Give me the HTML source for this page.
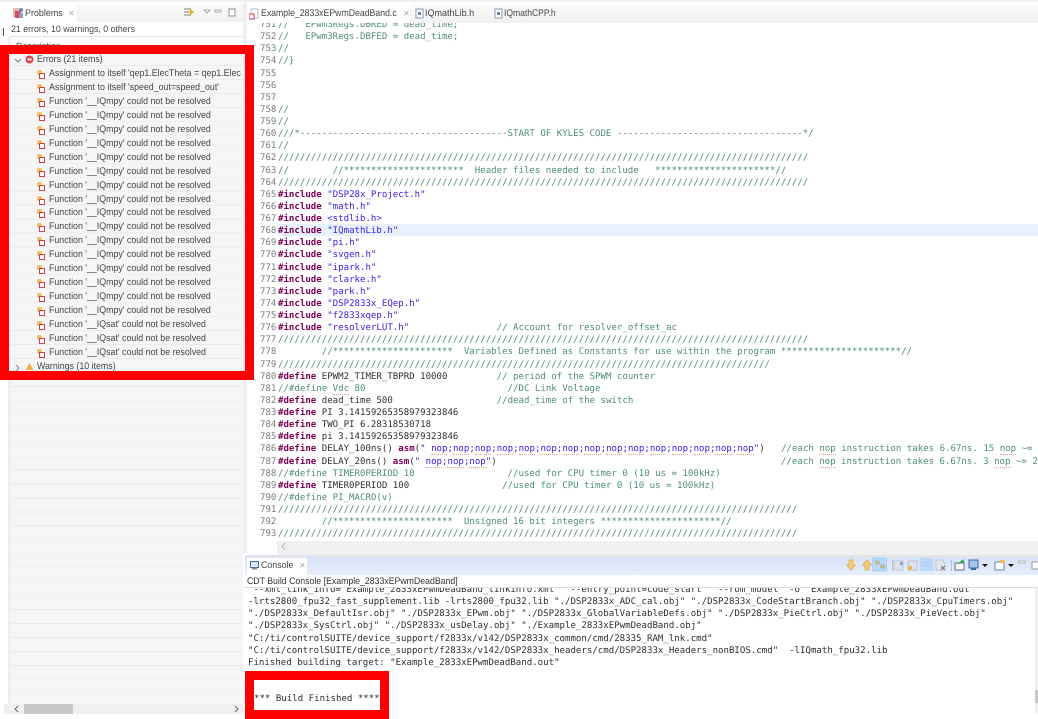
<!DOCTYPE html>
<html><head><meta charset="utf-8"><style>
html,body{margin:0;padding:0;width:1038px;height:719px;overflow:hidden;background:#fff}
#w{position:absolute;left:0;top:0;width:1038px;height:719px;overflow:hidden;filter:blur(.35px);background:#fff;font-family:"Liberation Sans",sans-serif;color:#3c3c3c;text-rendering:geometricPrecision}
.a{position:absolute}
.t{position:absolute;font-size:9px;line-height:12px;white-space:pre;transform-origin:0 50%}
pre{margin:0;font-family:"DejaVu Sans Mono","Liberation Mono",monospace;font-size:9.08px;line-height:12.122px;text-rendering:geometricPrecision}
.g{color:#4f8f76}.k{color:#7f0055;font-weight:bold}.s{color:#3a20ee}.d{color:#2f2f2f}
u{text-decoration:none;border-bottom:1px dotted #eb9a8c}
.r{position:absolute;left:0;height:14px;width:243px;font-size:9.6px;line-height:14px;white-space:pre;color:#444;overflow:hidden}
.r i{position:absolute;left:37px;top:3px;width:5px;height:5px;background:#f0c060;border-radius:2px}
.r i:after{content:"";position:absolute;left:2px;top:3px;width:4px;height:4px;border:1px solid #d83a4a;background:#fff}
.r span{position:absolute;left:49px;top:0;transform:scaleX(.92);transform-origin:0 50%}
</style></head><body><div id="w">

<!-- top bars -->
<div class="a" style="left:0;top:0;width:1038px;height:2px;background:#efefef"></div>
<div class="a" style="left:77px;top:4px;width:166px;height:18px;background:linear-gradient(#fafafa,#f1f1f1)"></div>
<div class="a" style="left:410px;top:4px;width:628px;height:19px;background:linear-gradient(#fafafa,#f1f1f1)"></div>
<div class="a" style="left:243px;top:3px;width:4px;height:550px;background:#f0f0f0"></div>
<div class="a" style="left:3px;top:28px;width:1px;height:8px;background:#555"></div>

<!-- Problems tab -->
<svg class="a" style="left:12px;top:7px" width="12" height="13"><rect x="1" y="1" width="6" height="9" fill="#e9b6b6"/><rect x="3" y="4" width="6" height="7" fill="#d94a5a"/><circle cx="9" cy="3" r="2" fill="#6b84b8"/><rect x="7" y="6" width="4" height="5" fill="#8aa0c8"/></svg>
<div class="t" style="left:25px;top:8px;font-size:9.5px;transform:scaleX(.94);color:#444">Problems</div>
<div class="t" style="left:68px;top:8px;font-size:8px;color:#aaa">✕</div>
<!-- problems toolbar -->
<svg class="a" style="left:183px;top:6px" width="58" height="13">
<path d="M1 3h7M1 6h7M1 9h7" stroke="#8a8a5a" stroke-width="1"/><path d="M7 3l4 3-4 3z" fill="#e3a92c"/>
<path d="M21 4h6l-3 3z" fill="#fff" stroke="#9a9a9a" stroke-width=".8"/>
<rect x="32" y="4" width="6" height="2" fill="#fff" stroke="#9a9a9a" stroke-width=".8"/>
<rect x="46" y="3" width="6" height="7" fill="#fff" stroke="#8f8f8f" stroke-width="1"/></svg>
<div class="t" style="left:11px;top:23px;font-size:9.35px;transform:scaleX(.94);color:#444">21 errors, 10 warnings, 0 others</div>
<div class="a" style="left:10px;top:36px;width:233px;height:1px;background:#e2e2e2"></div>
<div class="t" style="left:16px;top:40px;color:#444">Description</div>

<!-- problems table -->
<div class="a" style="left:8px;top:37px;width:3px;height:667px;background:#efefef"></div>
<div class="a" style="left:11px;top:52px;width:232px;height:652px;background:repeating-linear-gradient(#f6f6f6 0,#f6f6f6 13.2px,#ebebeb 13.2px,#ebebeb 13.95px)"></div>
<div class="a" style="left:0;top:53px;width:243px;height:330px;overflow:hidden">
<div class="r" style="top:0"><svg class="a" style="left:14px;top:5px" width="8" height="6"><path d="M1 1l3 3 3-3" fill="none" stroke="#777"/></svg><svg class="a" style="left:25px;top:2px" width="9" height="9"><circle cx="4.5" cy="4.5" r="4" fill="#d8404c"/><rect x="2.5" y="3.5" width="4" height="2" fill="#fff"/></svg><span style="left:37px">Errors (21 items)</span></div>
<div class="r" style="top:14px"><i></i><span>Assignment to itself 'qep1.ElecTheta = qep1.Elec</span></div>
<div class="r" style="top:28px"><i></i><span>Assignment to itself 'speed_out=speed_out'</span></div>
<div class="r" style="top:42px"><i></i><span>Function '__IQmpy' could not be resolved</span></div>
<div class="r" style="top:56px"><i></i><span>Function '__IQmpy' could not be resolved</span></div>
<div class="r" style="top:70px"><i></i><span>Function '__IQmpy' could not be resolved</span></div>
<div class="r" style="top:84px"><i></i><span>Function '__IQmpy' could not be resolved</span></div>
<div class="r" style="top:98px"><i></i><span>Function '__IQmpy' could not be resolved</span></div>
<div class="r" style="top:112px"><i></i><span>Function '__IQmpy' could not be resolved</span></div>
<div class="r" style="top:126px"><i></i><span>Function '__IQmpy' could not be resolved</span></div>
<div class="r" style="top:140px"><i></i><span>Function '__IQmpy' could not be resolved</span></div>
<div class="r" style="top:153px"><i></i><span>Function '__IQmpy' could not be resolved</span></div>
<div class="r" style="top:167px"><i></i><span>Function '__IQmpy' could not be resolved</span></div>
<div class="r" style="top:181px"><i></i><span>Function '__IQmpy' could not be resolved</span></div>
<div class="r" style="top:195px"><i></i><span>Function '__IQmpy' could not be resolved</span></div>
<div class="r" style="top:209px"><i></i><span>Function '__IQmpy' could not be resolved</span></div>
<div class="r" style="top:223px"><i></i><span>Function '__IQmpy' could not be resolved</span></div>
<div class="r" style="top:237px"><i></i><span>Function '__IQmpy' could not be resolved</span></div>
<div class="r" style="top:251px"><i></i><span>Function '__IQmpy' could not be resolved</span></div>
<div class="r" style="top:265px"><i></i><span>Function '__IQsat' could not be resolved</span></div>
<div class="r" style="top:279px"><i></i><span>Function '__IQsat' could not be resolved</span></div>
<div class="r" style="top:293px"><i></i><span>Function '__IQsat' could not be resolved</span></div>
<div class="r" style="top:307px"><svg class="a" style="left:15px;top:4px" width="6" height="8"><path d="M1 1l3 3-3 3" fill="none" stroke="#888"/></svg><svg class="a" style="left:25px;top:2px" width="9" height="9"><path d="M4.5 1l4 7h-8z" fill="#eab04a"/></svg><span style="left:37px">Warnings (10 items)</span></div>
</div>
<!-- h scrollbar -->
<div class="a" style="left:4px;top:704px;width:239px;height:10px;background:#f0f0f0"></div>
<div class="a" style="left:24px;top:704px;width:49px;height:10px;background:#c8c8c8"></div>
<svg class="a" style="left:14px;top:705px" width="230" height="8"><path d="M4 1L1 4l3 3" fill="none" stroke="#666"/><path d="M221 1l3 3-3 3" fill="none" stroke="#666"/></svg>

<!-- editor tabs -->
<svg class="a" style="left:249px;top:8px" width="11" height="12"><rect x="2" y="1" width="7" height="9" fill="#fff" stroke="#9ab" stroke-width=".8"/><rect x="0" y="6" width="5" height="5" fill="#fff" stroke="#d83a4a"/></svg>
<div class="t" style="left:261px;top:8px;font-size:9.7px;color:#444;transform:scaleX(.9)">Example_2833xEPwmDeadBand.c</div>
<div class="t" style="left:403px;top:8px;font-size:8px;color:#aaa">✕</div>
<svg class="a" style="left:415px;top:8px" width="9" height="11"><rect x="1" y="1" width="7" height="9" fill="#fff" stroke="#8a9bb8"/><rect x="3" y="4" width="3" height="3" fill="#6a80b0"/></svg>
<div class="t" style="left:425px;top:8px;font-size:9.6px;color:#444;transform:scaleX(.94)">IQmathLib.h</div>
<svg class="a" style="left:494px;top:8px" width="9" height="11"><rect x="1" y="1" width="7" height="9" fill="#fff" stroke="#8a9bb8"/><rect x="3" y="4" width="3" height="3" fill="#6a80b0"/></svg>
<div class="t" style="left:504px;top:8px;font-size:9.6px;color:#444;transform:scaleX(.89)">IQmathCPP.h</div>

<!-- editor -->
<div class="a" style="left:277px;top:224px;width:761px;height:12px;background:#e8f2fe"></div>
<div class="a" style="left:247px;top:23px;width:30px;height:518px;overflow:hidden"><pre style="position:absolute;left:13px;top:-4px;color:#7c7c7c">751
752
753
754
755
756
757
758
759
760
761
762
763
764
765
766
767
768
769
770
771
772
773
774
775
776
777
778
779
780
781
782
783
784
785
786
787
788
789
790
791
792
793</pre></div>
<div class="a" style="left:278px;top:23px;width:760px;height:518px;overflow:hidden"><pre style="position:absolute;left:0;top:-4px"><span class="g">//   EPwm3Regs.DBRED = dead_time;
//   EPwm3Regs.DBFED = dead_time;
//
//}</span>



<span class="g">//
//
///*--------------------------------------START OF KYLES CODE ----------------------------------*/
//
/////////////////////////////////////////////////////////////////////////////////////////////////
//        //**********************  Header files needed to include   **********************//
/////////////////////////////////////////////////////////////////////////////////////////////////</span>
<span class="k">#include</span> <span class="s">"DSP28x_Project.h"</span>
<span class="k">#include</span> <span class="s">"math.h"</span>
<span class="k">#include</span> <span class="s">&lt;stdlib.h&gt;</span>
<span class="k">#include</span> <span class="s">"IQmathLib.h"</span>
<span class="k">#include</span> <span class="s">"pi.h"</span>
<span class="k">#include</span> <span class="s">"svgen.h"</span>
<span class="k">#include</span> <span class="s">"ipark.h"</span>
<span class="k">#include</span> <span class="s">"clarke.h"</span>
<span class="k">#include</span> <span class="s">"park.h"</span>
<span class="k">#include</span> <span class="s">"DSP2833x_EQep.h"</span>
<span class="k">#include</span> <span class="s">"f2833xqep.h"</span>
<span class="k">#include</span> <span class="s">"resolverLUT.h"</span>                <span class="g">// Account for resolver_offset_ac</span>
<span class="g">/////////////////////////////////////////////////////////////////////////////////////////////////
        //**********************  Variables Defined as Constants for use within the program **********************//
//////////////////////////////////////////////////////////////////////////////////////////</span>
<span class="k">#define</span> <span class="d">EPWM2_TIMER_TBPRD 10000</span>         <span class="g">// period of the SPWM counter</span>
<span class="g">//#define <u>Vdc</u> 80                          //DC Link Voltage</span>
<span class="k">#define</span> <span class="d">dead_time 500</span>                   <span class="g">//dead_time of the switch</span>
<span class="k">#define</span> <span class="d">PI 3.14159265358979323846</span>
<span class="k">#define</span> <span class="d">TWO_PI 6.28318530718</span>
<span class="k">#define</span> <span class="d">pi 3.14159265358979323846</span>
<span class="k">#define</span> <span class="d">DELAY_100ns()</span> <span class="k">asm</span><span class="d">(</span><span class="s">" <u>nop</u>;<u>nop</u>;<u>nop</u>;<u>nop</u>;<u>nop</u>;<u>nop</u>;<u>nop</u>;<u>nop</u>;<u>nop</u>;<u>nop</u>;<u>nop</u>;<u>nop</u>;<u>nop</u>;<u>nop</u>;<u>nop</u>"</span><span class="d">)</span>   <span class="g">//each <u>nop</u> instruction takes 6.67ns. 15 <u>nop</u> ~= 100ns</span>
<span class="k">#define</span> <span class="d">DELAY_20ns()</span> <span class="k">asm</span><span class="d">(</span><span class="s">" <u>nop</u>;<u>nop</u>;<u>nop</u>"</span><span class="d">)</span>                                                    <span class="g">//each <u>nop</u> instruction takes 6.67ns. 3 <u>nop</u> ~= 20ns</span>
<span class="g">//#define TIMER0PERIOD 10                 //used for CPU timer 0 (10 us = 100kHz)</span>
<span class="k">#define</span> <span class="d">TIMER0PERIOD 100</span>                 <span class="g">//used for CPU timer 0 (10 us = 100kHz)</span>
<span class="g">//#define PI_MACRO(v)
///////////////////////////////////////////////////////////////////////////////////////////////
        //**********************  Unsigned 16 bit integers **********************//
///////////////////////////////////////////////////////////////////////////////////////////////</span></pre></div>
<div class="a" style="left:277px;top:541px;width:761px;height:14px;background:#f0f0f0"></div>
<svg class="a" style="left:281px;top:542px" width="6" height="9"><path d="M4 1L1 4.500l3 3.500" fill="none" stroke="#bbb"/></svg>
<div class="a" style="left:245px;top:555px;width:793px;height:2px;background:#e4e4e4"></div>

<!-- console header -->
<div class="a" style="left:245px;top:557px;width:793px;height:18px;background:linear-gradient(#d8e3f8,#e6edfb)"></div>
<div class="a" style="left:247px;top:558px;width:60px;height:17px;background:#fff"></div>
<svg class="a" style="left:250px;top:561px" width="9" height="9"><rect x=".5" y=".5" width="8" height="6" fill="#dbe6f5" stroke="#51719f"/><rect x="2" y="7" width="5" height="1.500" fill="#7a8ba8"/></svg>
<div class="t" style="left:261px;top:560px;font-size:9.5px;color:#444;transform:scaleX(.93)">Console</div>
<div class="t" style="left:299px;top:560px;font-size:8px;color:#aaa">✕</div>
<svg class="a" style="left:845px;top:557px" width="193" height="18">
<path d="M4 3h4v5h2.500L6 13 1.500 8H4z" fill="#f3cd7a" stroke="#d9a640" stroke-width=".7"/>
<path d="M20 13h4V8h2.500L22 3l-4.500 5H20z" fill="#f3cd7a" stroke="#d9a640" stroke-width=".7"/>
<rect x="27.500" y="1" width="14" height="13" fill="#bcd8f8" stroke="#9cc3ef" stroke-width=".6"/>
<path d="M31 4h3v3h-3zM36 8h3v3h-3z" fill="#f3cd7a" stroke="#8a8a6a" stroke-width=".6"/>
<path d="M47.500 3v11" stroke="#b8c0d0"/>
<rect x="49" y="4" width="9" height="9" fill="#dfe4ea" stroke="#aab6c6" stroke-width=".7"/><path d="M55 5h3v3h-3z" fill="#8fa0b8"/>
<rect x="63" y="4" width="9" height="9" fill="#dfe4ea" stroke="#aab6c6" stroke-width=".7"/><rect x="63" y="9" width="4" height="4" fill="#e6b95a"/>
<rect x="74.500" y="1" width="14" height="13" fill="#bcd8f8"/><path d="M78 5h7M78 8h6" stroke="#a8c4ea"/>
<path d="M91 3h6l3 3v7h-9z" fill="#e4e6ea" stroke="#b4bcc8" stroke-width=".7"/><path d="M96 9l4 4m0-4l-4 4" stroke="#777"/>
<path d="M106.500 3v11" stroke="#b8c0d0"/>
<rect x="110" y="6" width="9" height="7" fill="#fff" stroke="#5a6f8f"/><path d="M113 7l5-4 1 2" fill="#2fa84f" stroke="#2fa84f"/>
<rect x="124" y="3" width="9" height="8" fill="#a8c4ea" stroke="#3c6aa8"/><rect x="126" y="11" width="5" height="2" fill="#3c6aa8"/>
<path d="M137 7h6l-3 3z" fill="#111"/>
<rect x="150" y="5" width="9" height="8" fill="#fff" stroke="#6a84a8"/><rect x="155" y="3" width="5" height="3" fill="#f0c050"/>
<path d="M163 7h6l-3 3z" fill="#111"/>
<rect x="174" y="4" width="6" height="2" fill="#fff" stroke="#a8a8a8" stroke-width=".8"/>
<rect x="187" y="5" width="8" height="7" fill="#fff" stroke="#999"/>
</svg>
<div class="t" style="left:247px;top:576px;font-size:9.5px;color:#333;transform:scaleX(.92)">CDT Build Console [Example_2833xEPwmDeadBand]</div>
<div class="a" style="left:245px;top:587px;width:793px;height:1px;background:#ddd"></div>

<!-- console -->
<div class="a" style="left:248px;top:588px;width:786px;height:131px;overflow:hidden"><pre style="position:absolute;left:0;top:-4px;color:#2f2f2f">"--xml_link_info="Example_2833xEPwmDeadBand_linkinfo.xml" "--entry_point=code_start" "--rom_model" -o "Example_2833xEPwmDeadBand.out"
-lrts2800_fpu32_fast_supplement.lib -lrts2800_fpu32.lib "./DSP2833x_ADC_cal.obj" "./DSP2833x_CodeStartBranch.obj" "./DSP2833x_CpuTimers.obj"
"./DSP2833x_DefaultIsr.obj" "./DSP2833x_EPwm.obj" "./DSP2833x_GlobalVariableDefs.obj" "./DSP2833x_PieCtrl.obj" "./DSP2833x_PieVect.obj"
"./DSP2833x_SysCtrl.obj" "./DSP2833x_usDelay.obj" "./Example_2833xEPwmDeadBand.obj"
"C:/ti/controlSUITE/device_support/f2833x/v142/DSP2833x_common/cmd/28335_RAM_lnk.cmd"
"C:/ti/controlSUITE/device_support/f2833x/v142/DSP2833x_headers/cmd/DSP2833x_Headers_nonBIOS.cmd"  -lIQmath_fpu32.lib
Finished building target: "Example_2833xEPwmDeadBand.out"</pre></div>
<div class="a" style="left:1035px;top:588px;width:3px;height:126px;background:#f0f0f0"></div>
<div class="a" style="left:1035px;top:690px;width:3px;height:13px;background:#c8c8c8"></div>

<!-- red annotations -->
<div class="a" style="left:0;top:45px;width:236px;height:317px;border:9px solid #f00"></div>
<div class="a" style="left:245px;top:671px;width:126px;height:30px;border:9px solid #f00;background:#fff"></div>
<pre class="a" style="left:254px;top:693px;color:#2f2f2f;z-index:2">*** Build Finished ****</pre>
</div></body></html>
